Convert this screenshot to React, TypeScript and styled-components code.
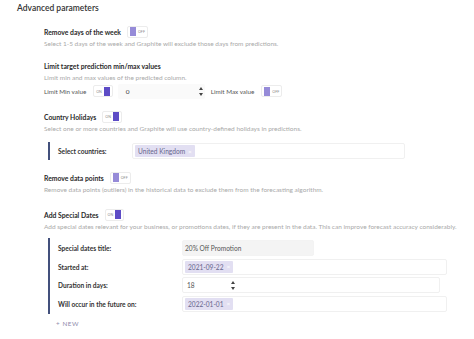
import styled, { createGlobalStyle } from "styled-components";

const GlobalStyle = createGlobalStyle`
  html, body {
    margin: 0;
    padding: 0;
    background: #ffffff;
    font-family: Lato, "Open Sans", sans-serif;
    color: #333;
  }
`;

const Toggle = ({ on }: { on: boolean }) => (
  <ToggleBox>
    {on ? (
      <>
        <ToggleText>ON</ToggleText>
        <Knob />
      </>
    ) : (
      <>
        <Knob $off />
        <ToggleText>OFF</ToggleText>
      </>
    )}
  </ToggleBox>
);

const Spinner = () => (
  <SpinBox>
    <svg width="4" height="3" viewBox="0 0 4 3">
      <path d="M0 3 L2 0 L4 3 Z" fill="#444" />
    </svg>
    <svg width="4" height="3" viewBox="0 0 4 3">
      <path d="M0 0 L2 3 L4 0 Z" fill="#444" />
    </svg>
  </SpinBox>
);

export default function App() {
  return (
    <Page>
      <GlobalStyle />
      <Heading>Advanced parameters</Heading>

      <Content>
        <Section>
          <TitleRow>
            <Title>Remove days of the week</Title>
            <Toggle on={false} />
          </TitleRow>
          <Desc>
            Select 1-5 days of the week and Graphite will exclude those days from predictions.
          </Desc>
        </Section>

        <Section>
          <TitleRow>
            <Title>Limit target prediction min/max values</Title>
          </TitleRow>
          <Desc>Limit min and max values of the predicted column.</Desc>
          <LimitRow>
            <SmallLabel>Limit Min value</SmallLabel>
            <Toggle on />
            <NumberInput $width={87}>
              <span>0</span>
              <Spinner />
            </NumberInput>
            <SmallLabel>Limit Max value</SmallLabel>
            <Toggle on={false} />
          </LimitRow>
        </Section>

        <Section>
          <TitleRow>
            <Title>Country Holidays</Title>
            <Toggle on />
          </TitleRow>
          <Desc>
            Select one or more countries and Graphite will use country-defined holidays in predictions.
          </Desc>
          <Block>
            <BlockRow $labelWidth={74}>
              <FieldLabel>Select countries:</FieldLabel>
              <Field $width={273}>
                <Chip>
                  United Kingdom <ChipX>×</ChipX>
                </Chip>
              </Field>
            </BlockRow>
          </Block>
        </Section>

        <Section>
          <TitleRow>
            <Title>Remove data points</Title>
            <Toggle on={false} />
          </TitleRow>
          <Desc>
            Remove data points (outliers) in the historical data to exclude them from the forecasting algorithm.
          </Desc>
        </Section>

        <Section $spaced>
          <TitleRow>
            <Title>Add Special Dates</Title>
            <Toggle on />
          </TitleRow>
          <Desc>
            Add special dates relevant for your business, or promotions dates, if they are present in the data. This can improve forecast accuracy considerably.
          </Desc>
          <Block $tall>
            <BlockRow $labelWidth={124}>
              <FieldLabel>Special dates title:</FieldLabel>
              <Field $width={132} $filled>
                20% Off Promotion
              </Field>
            </BlockRow>
            <BlockRow $labelWidth={124}>
              <FieldLabel>Started at:</FieldLabel>
              <Field $width={265}>
                <Chip>
                  2021-09-22 <ChipX>×</ChipX>
                </Chip>
              </Field>
            </BlockRow>
            <BlockRow $labelWidth={124}>
              <FieldLabel>Duration in days:</FieldLabel>
              <Field $width={258}>
                <DurationValue>
                  <span>18</span>
                  <Spinner />
                </DurationValue>
              </Field>
            </BlockRow>
            <BlockRow $labelWidth={124}>
              <FieldLabel>Will occur in the future on:</FieldLabel>
              <Field $width={265}>
                <Chip>
                  2022-01-01 <ChipX>×</ChipX>
                </Chip>
              </Field>
            </BlockRow>
          </Block>
          <NewButton>+ NEW</NewButton>
        </Section>
      </Content>
    </Page>
  );
}

const Page = styled.div`
  width: 474px;
  height: 339px;
  overflow: hidden;
  padding: 2px 0 0 17px;
  box-sizing: border-box;
`;

const Heading = styled.h2`
  margin: 0;
  font-size: 8.5px;
  line-height: 12px;
  font-weight: 600;
  color: #333;
`;

const Content = styled.div`
  padding: 11px 0 0 27px;
  display: flex;
  flex-direction: column;
  gap: 11px;
`;

const Section = styled.div<{ $spaced?: boolean }>`
  display: flex;
  flex-direction: column;
  margin-top: ${(p) => (p.$spaced ? 3 : 0)}px;
`;

const TitleRow = styled.div`
  display: flex;
  align-items: center;
  gap: 6px;
  height: 13px;
`;

const Title = styled.span`
  font-size: 6.8px;
  font-weight: 700;
  color: #2a2a2a;
`;

const Desc = styled.div`
  margin-top: 1px;
  font-size: 6.5px;
  line-height: 9px;
  color: #a9a9a9;
  white-space: nowrap;
`;

const ToggleBox = styled.div`
  display: flex;
  align-items: center;
  gap: 2px;
  height: 10px;
  padding: 0 2px;
  border: 1px solid #ececec;
  border-radius: 2px;
  background: #fff;
`;

const Knob = styled.div<{ $off?: boolean }>`
  width: 6px;
  height: 9px;
  background: ${(p) => (p.$off ? "#968bd8" : "#5d4cc6")};
`;

const ToggleText = styled.span`
  font-size: 3.6px;
  color: #888;
`;

const LimitRow = styled.div`
  margin-top: 1px;
  display: flex;
  align-items: center;
  gap: 5px;
  height: 16px;
`;

const SmallLabel = styled.span`
  font-size: 6.3px;
  color: #555;
  margin-right: 2px;
`;

const NumberInput = styled.div<{ $width: number }>`
  width: ${(p) => p.$width}px;
  height: 15px;
  box-sizing: border-box;
  display: flex;
  align-items: center;
  justify-content: space-between;
  padding: 0 2px 0 8px;
  margin-right: 1px;
  font-size: 6.5px;
  color: #444;
  background: #fafafa;
  border-radius: 2px;
`;

const SpinBox = styled.div`
  display: flex;
  flex-direction: column;
  gap: 3px;
`;

const Block = styled.div<{ $tall?: boolean }>`
  margin-top: ${(p) => (p.$tall ? 7 : 9)}px;
  margin-left: 4px;
  border-left: 2px solid #43507c;
  padding: ${(p) => (p.$tall ? "2px 0 2px 8px" : "1px 0 1px 8px")};
  display: flex;
  flex-direction: column;
  gap: 2.5px;
`;

const BlockRow = styled.div<{ $labelWidth: number }>`
  display: grid;
  grid-template-columns: ${(p) => p.$labelWidth}px auto;
  align-items: center;
  height: 16px;
`;

const FieldLabel = styled.span`
  font-size: 6.6px;
  font-weight: 700;
  color: #333;
`;

const Field = styled.div<{ $width: number; $filled?: boolean }>`
  width: ${(p) => p.$width}px;
  height: 16px;
  box-sizing: border-box;
  display: flex;
  align-items: center;
  padding: 0 2px;
  font-size: 6.6px;
  color: #555;
  border: 1px solid ${(p) => (p.$filled ? "#f3f3f3" : "#f0f0f0")};
  background: ${(p) => (p.$filled ? "#f4f4f4" : "#fff")};
  border-radius: 2px;
`;

const Chip = styled.span`
  display: inline-flex;
  align-items: center;
  gap: 3px;
  height: 12px;
  padding: 0 3px;
  font-size: 6.6px;
  color: #67658c;
  background: #e2dff2;
  border-radius: 1px;
`;

const ChipX = styled.span`
  color: #fff;
  font-size: 6.5px;
`;

const DurationValue = styled.div`
  width: 48px;
  display: flex;
  align-items: center;
  justify-content: space-between;
  padding-left: 2px;
`;

const NewButton = styled.div`
  margin: 6px 0 0 12px;
  font-size: 6.3px;
  color: #8e8aab;
  letter-spacing: 0.6px;
`;
